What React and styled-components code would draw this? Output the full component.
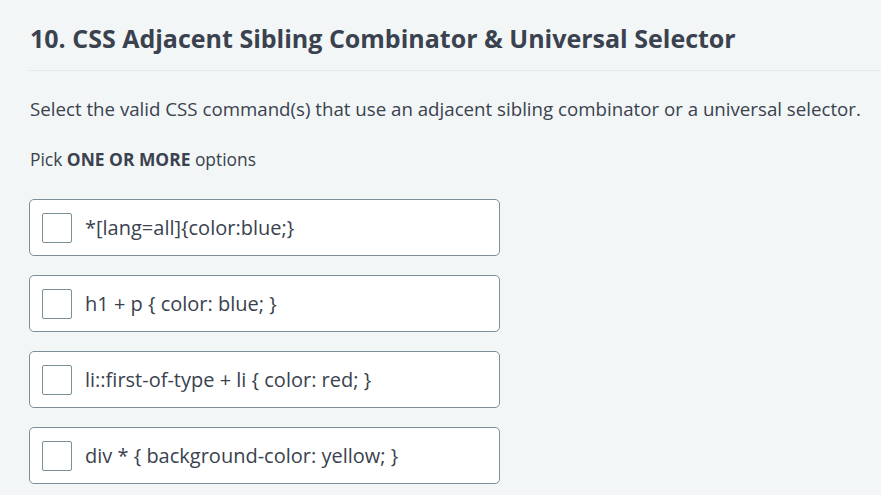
import React from "react";
import styled, { createGlobalStyle } from "styled-components";

const GlobalStyle = createGlobalStyle`
  html, body {
    margin: 0;
    padding: 0;
    background: #f3f6f7;
  }
  body {
    font-family: "Open Sans", "Liberation Sans", sans-serif;
    color: #39424e;
  }
`;

const Page = styled.div`
  padding: 20px 0 0 30px;
`;

const Title = styled.h2`
  margin: 0;
  font-size: 25px;
  font-weight: 700;
  line-height: 36px;
  color: #39424e;
`;

const Divider = styled.div`
  height: 1px;
  background: #e3e8eb;
  margin: 14px 0 0 -1px;
`;

const Question = styled.p`
  margin: 25px 0 0;
  font-size: 18.7px;
  line-height: 26px;
  color: #39424e;
`;

const Hint = styled.p`
  margin: 25px 0 0;
  font-size: 17.4px;
  line-height: 24px;
  color: #39424e;

  b {
    font-weight: 700;
  }
`;

const Options = styled.div`
  display: flex;
  flex-direction: column;
  gap: 19px;
  margin: 28px 0 0 -1px;
  width: 471px;
`;

const Option = styled.label`
  display: flex;
  align-items: center;
  gap: 13px;
  height: 57px;
  box-sizing: border-box;
  padding: 0 12px;
  background: #fff;
  border: 1px solid #7b8f96;
  border-radius: 5px;
  cursor: pointer;
`;

const Box = styled.span`
  width: 30px;
  height: 30px;
  box-sizing: border-box;
  border: 1px solid #7b8f96;
  border-radius: 2px;
  background: #fff;
  flex-shrink: 0;
`;

const OptionText = styled.span`
  font-size: 20px;
  color: #39424e;
`;

const options = [
  "*[lang=all]{color:blue;}",
  "h1 + p { color: blue; }",
  "li::first-of-type + li { color: red; }",
  "div * { background-color: yellow; }",
];

export default function App() {
  return (
    <Page>
      <GlobalStyle />
      <Title>10. CSS Adjacent Sibling Combinator &amp; Universal Selector</Title>
      <Divider />
      <Question>
        Select the valid CSS command(s) that use an adjacent sibling combinator or a universal selector.
      </Question>
      <Hint>
        Pick <b>ONE OR MORE</b> options
      </Hint>
      <Options>
        {options.map((o) => (
          <Option key={o}>
            <Box />
            <OptionText>{o}</OptionText>
          </Option>
        ))}
      </Options>
    </Page>
  );
}
